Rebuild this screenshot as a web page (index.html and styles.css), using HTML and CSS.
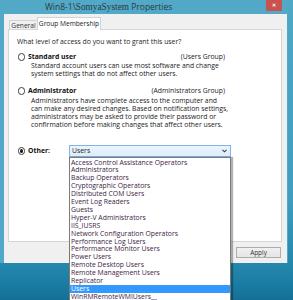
FILE: index.html
```html
<!DOCTYPE html>
<html>
<head>
<meta charset="utf-8">
<link rel="stylesheet" href="styles.css">
</head>
<body>
<div class="screen">
  <div class="window">
    <div class="titlebar">
      <div class="title">Win8-1\<span class="serif">SomyaSystem</span> Properties</div>
      <div class="close">&#x2715;</div>
    </div>
    <div class="body">
      <div class="tabs">
        <div class="tab">General</div>
        <div class="tab active">Group Membership</div>
      </div>
      <div class="panel">
        <p class="question">What level of access do you want to grant this user?</p>
        <div class="option first">
          <div class="opt-head"><span class="radio"></span><span class="opt-label">Standard user</span><span class="group">(Users Group)</span></div>
          <p class="desc">Standard account users can use most software and change<br>system settings that do not affect other users.</p>
        </div>
        <div class="option second">
          <div class="opt-head"><span class="radio"></span><span class="opt-label">Administrator</span><span class="group">(Administrators Group)</span></div>
          <p class="desc admin">Administrators have complete access to the computer and<br>can make any desired changes. Based on notification settings,<br>administrators may be asked to provide their password or<br>confirmation before making changes that affect other users.</p>
        </div>
        <div class="other-row">
          <span class="radio checked"></span><span class="opt-label other-label">Other:</span>
          <div class="combo">
            <span class="combo-value">Users</span>
            <svg class="arrow" width="5" height="4" viewBox="0 0 5 4"><path d="M0.5 0.8 L2.5 2.8 L4.5 0.8" fill="none" stroke="#3a3a3a" stroke-width="1.1"/></svg>
            <ul class="dropdown">
              <li>Access Control Assistance Operators</li>
              <li>Administrators</li>
              <li>Backup Operators</li>
              <li>Cryptographic Operators</li>
              <li>Distributed COM Users</li>
              <li>Event Log Readers</li>
              <li>Guests</li>
              <li>Hyper-V Administrators</li>
              <li>IIS_IUSRS</li>
              <li>Network Configuration Operators</li>
              <li>Performance Log Users</li>
              <li>Performance Monitor Users</li>
              <li>Power Users</li>
              <li>Remote Desktop Users</li>
              <li>Remote Management Users</li>
              <li>Replicator</li>
              <li class="selected">Users</li>
              <li>WinRMRemoteWMIUsers__</li>
            </ul>
          </div>
        </div>
      </div>
      <div class="footer">
        <div class="btn">Apply</div>
      </div>
    </div>
  </div>
</div>
</body>
</html>
```
FILE: styles.css
```css
html, body {
  margin: 0;
  padding: 0;
}
body {
  width: 293px;
  height: 300px;
  overflow: hidden;
  font-family: "Open Sans", "Noto Sans", sans-serif;
  color: #1e1e1e;
}
.screen {
  width: 293px;
  height: 300px;
  overflow: hidden;
  background: linear-gradient(180deg, #4ea8c6 0px, #3f9dbf 200px, #2588ad 262px, #1a7ca2 285px, #146f96 300px);
}
.window {
  width: 283px;
  padding: 0 1px 0 4px;
  background: #52a9c7;
}
.titlebar {
  height: 14px;
  display: flex;
  align-items: flex-start;
}
.title {
  flex: 1;
  white-space: nowrap;
  padding-left: 41px;
  font-size: 8.5px;
  line-height: 14px;
  color: #2c3a40;
}
.serif {
  font-family: "Liberation Serif", serif;
  font-size: 9.3px;
}
.close {
  width: 16px;
  height: 11px;
  margin-right: 5px;
  background: #c9514f;
  color: #fff;
  font-size: 5px;
  line-height: 11px;
  text-align: center;
  font-weight: bold;
  flex: none;
}
.body {
  background: #f0f0f0;
  height: 249px;
  padding: 3px 5px 0 4px;
  box-sizing: border-box;
  position: relative;
}
.tabs {
  display: flex;
  align-items: flex-end;
  height: 12px;
  margin-left: 1px;
  position: relative;
  z-index: 2;
}
.tab {
  font-size: 6.6px;
  height: 9px;
  line-height: 9px;
  border: 1px solid #d3d3d3;
  border-bottom: none;
  background: #f0f0f0;
  color: #333;
  box-sizing: border-box;
  width: 29px;
  text-align: center;
  white-space: nowrap;
}
.tab.active {
  height: 13px;
  margin-bottom: -1px;
  background: #fff;
  width: 64px;
  line-height: 12px;
  margin-left: -1px;
  color: #222;
}
.panel {
  position: relative;
  z-index: 1;
  height: 213px;
  box-sizing: border-box;
  border: 1px solid #d6d6d6;
  background: #fff;
  padding: 8px 0 0 8px;
  font-size: 6.85px;
  line-height: 8px;
}
.question {
  margin: 0;
}
.option.first {
  margin-top: 7px;
}
.option.second {
  margin-top: 9px;
}
.opt-head {
  display: flex;
  align-items: center;
  width: 208px;
  height: 8px;
}
.radio {
  width: 7.5px;
  height: 7.5px;
  box-sizing: border-box;
  border: 1px solid #3c3c3c;
  border-radius: 50%;
  background: #fff;
  margin-left: 0.5px;
  display: flex;
  align-items: center;
  justify-content: center;
  flex: none;
}
.radio.checked::after {
  content: "";
  width: 3.4px;
  height: 3.4px;
  border-radius: 50%;
  background: #1e1e1e;
}
.opt-label {
  font-weight: bold;
  margin-left: 3px;
  color: #111;
}
.group {
  margin-left: auto;
  color: #222;
}
.desc {
  margin: 1px 0 0 14px;
  color: #222;
  white-space: nowrap;
}
.desc.admin {
  margin-top: 2px;
}
.other-row {
  display: flex;
  align-items: center;
  margin-top: 16px;
  height: 12px;
}
.other-label {
  width: 41px;
  flex: none;
}
.combo {
  position: relative;
  width: 162px;
  height: 12px;
  box-sizing: border-box;
  border: 1px solid #7eb4ea;
  background: linear-gradient(180deg, #ecf4fc, #dcecfc);
  display: flex;
  align-items: center;
  justify-content: space-between;
  padding: 0 3px 0 2px;
}
.combo-value {
  color: #1e1e1e;
}
.dropdown {
  position: absolute;
  top: 11px;
  left: -1px;
  width: 162px;
  box-sizing: border-box;
  margin: 0;
  padding: 0.5px 0 0 0;
  list-style: none;
  background: #fff;
  border: 1px solid #7a7a7a;
  box-shadow: 2px 0 1px rgba(0, 0, 0, 0.3);
  z-index: 5;
}
.dropdown li {
  height: 7.92px;
  line-height: 7.92px;
  padding-left: 1px;
  color: #3d2446;
  white-space: nowrap;
}
.dropdown li.selected {
  background: #3399ff;
  color: #fff;
}
.footer {
  display: flex;
  justify-content: flex-end;
  padding-top: 5px;
  padding-right: 1px;
}
.btn {
  width: 45px;
  height: 11px;
  box-sizing: border-box;
  border: 1px solid #acacac;
  background: linear-gradient(180deg, #f0f0f0, #e5e5e5);
  font-size: 6.4px;
  line-height: 9px;
  text-align: center;
  color: #333;
}
```
